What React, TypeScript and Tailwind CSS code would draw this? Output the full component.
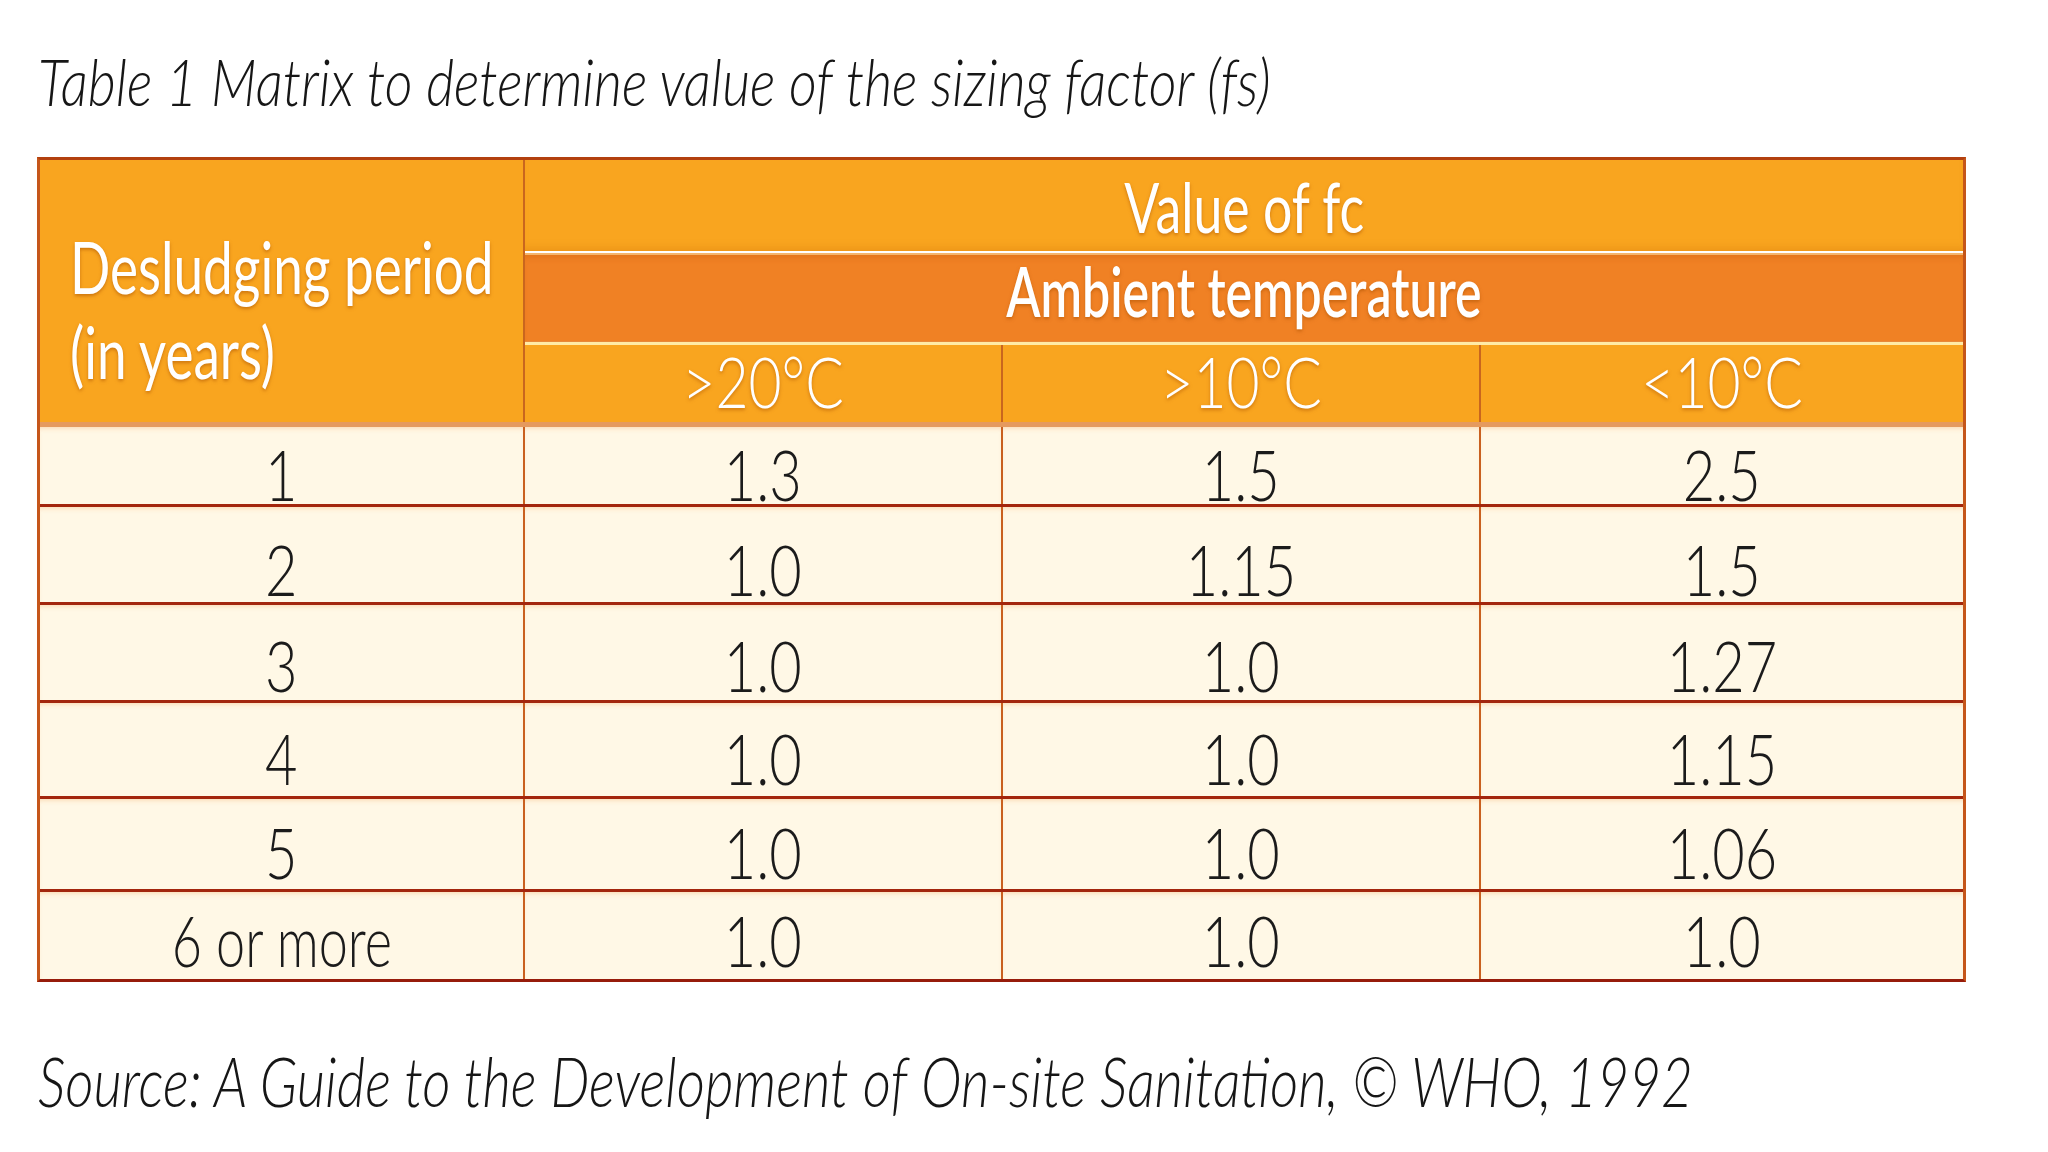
import React from 'react';

const rows = [
  { label: '1', values: ['1.3', '1.5', '2.5'], h: 'h-[80px]', pb: 'pb-0' },
  { label: '2', values: ['1.0', '1.15', '1.5'], h: 'h-[98px]', pb: 'pb-[3px]' },
  { label: '3', values: ['1.0', '1.0', '1.27'], h: 'h-[98px]', pb: 'pb-[5px]' },
  { label: '4', values: ['1.0', '1.0', '1.15'], h: 'h-[96px]', pb: 'pb-[8px]' },
  { label: '5', values: ['1.0', '1.0', '1.06'], h: 'h-[93px]', pb: 'pb-[7px]' },
  { label: '6 or more', values: ['1.0', '1.0', '1.0'], h: 'h-[87px]', pb: 'pb-[9px]' },
];

// the original face is a condensed Futura, so squeeze the glyphs horizontally
const Narrow = ({ children, s, left }: { children: React.ReactNode; s: string; left?: boolean }) => (
  <span className={`inline-block whitespace-nowrap ${s} ${left ? 'origin-left' : 'origin-center'}`}>
    {children}
  </span>
);

const headShadow = '[text-shadow:0_2px_4px_rgba(170,80,0,0.55)]';

export default function App() {
  return (
    <div className="w-[2048px] h-[1152px] bg-white overflow-hidden font-['Lato',sans-serif]">
      {/* Caption */}
      <div className="h-[157px] pt-[48px] pl-[38px] text-[66px] leading-none italic font-light text-[#161616]">
        <Narrow s="scale-x-[0.82]" left>Table 1 Matrix to determine value of the sizing factor (fs)</Narrow>
      </div>

      {/* Table */}
      <div className="ml-[37px] w-[1929px] border-[3px] border-[#C5561A] border-t-[#B3400F] border-b-[#971C0B]">
        {/* Header */}
        <div className="flex h-[262px] text-white">
          <div className={`w-[485px] border-r-2 border-[#C9661E] bg-[#F9A51F] pl-[30px] pt-[64px] text-[72px] leading-[85px] ${headShadow}`}>
            <Narrow s="scale-x-[0.737]" left>Desludging period</Narrow>
            <br />
            <Narrow s="scale-x-[0.737]" left>(in years)</Narrow>
          </div>
          <div className="flex flex-1 flex-col">
            <div className={`flex h-[91px] items-center justify-center bg-[#F9A51F] shadow-[inset_0_-8px_8px_-6px_rgba(205,110,0,0.35)] text-[70px] leading-none ${headShadow}`}>
              <Narrow s="scale-x-[0.74]">Value of fc</Narrow>
            </div>
            <div className="h-[4px] border-t-2 border-white bg-[#F5B56A]" />
            <div className={`flex h-[86px] items-start justify-center bg-[#F08124] shadow-[inset_0_6px_6px_-4px_rgba(200,90,0,0.4)] text-[70px] leading-none font-semibold ${headShadow}`}>
              <Narrow s="scale-x-[0.714]">Ambient temperature</Narrow>
            </div>
            <div className="h-[4px] bg-[#FFEBA6] border-t border-[#E8893A]" />
            <div className="grid h-[77px] grid-cols-[478px_478px_482px] bg-[#F9A51F] text-[70px] leading-none font-light">
              {['>20°C', '>10°C', '<10°C'].map((t, i) => (
                <div
                  key={t}
                  className={`flex justify-center pt-[1px] ${i < 2 ? 'border-r-2 border-[#C9661E]' : ''} ${headShadow}`}
                >
                  <Narrow s="scale-x-[0.815]">{t}</Narrow>
                </div>
              ))}
            </div>
          </div>
        </div>
        <div className="h-[5px] bg-[#E59A5E]" />

        {/* Body */}
        <div className="bg-[#FFF8E6] text-[#1b1b1b] font-light text-[70px] leading-[60px]">
          {rows.map((r, ri) => (
            <div
              key={r.label}
              className={`grid grid-cols-[485px_478px_478px_482px] ${r.h} ${ri < rows.length - 1 ? 'border-b-[3px] border-[#A3260D]' : ''}`}
            >
              {[r.label, ...r.values].map((v, ci) => (
                <div
                  key={ci}
                  className={`flex items-end justify-center ${r.pb} ${ci < 3 ? 'border-r-2 border-[#C9601F]' : ''} shadow-[inset_0_4px_5px_-3px_rgba(245,170,100,0.45)]`}
                >
                  <Narrow s={v.length > 4 ? 'scale-x-[0.745]' : 'scale-x-[0.8]'}>{v}</Narrow>
                </div>
              ))}
            </div>
          ))}
        </div>
      </div>

      {/* Source */}
      <div className="mt-[63px] pl-[38px] text-[70px] leading-none italic font-light text-[#161616]">
        <Narrow s="scale-x-[0.786]" left>Source: A Guide to the Development of On-site Sanitation, © WHO, 1992</Narrow>
      </div>
    </div>
  );
}
